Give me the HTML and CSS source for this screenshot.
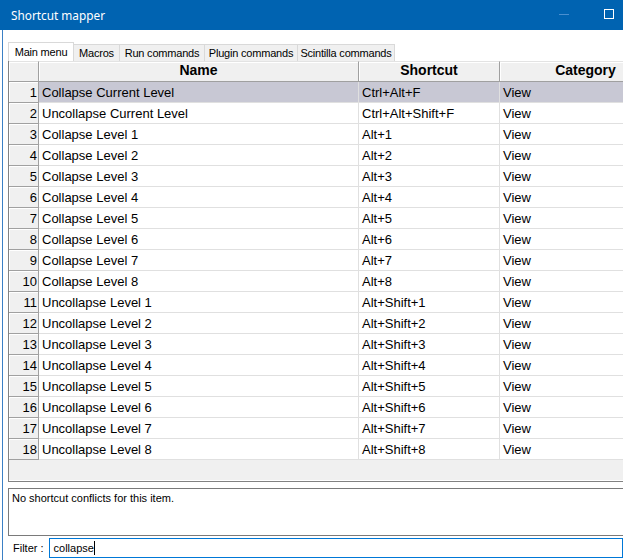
FILE: index.html
```html
<!DOCTYPE html>
<html>
<head>
<meta charset="utf-8">
<title>Shortcut mapper</title>
<link rel="stylesheet" href="styles.css">
</head>
<body>
<div class="titlebar">
  <span class="title">Shortcut mapper</span>
  <span class="min"></span>
  <span class="max"></span>
</div>
<div class="client">
  <div class="tabs">
    <div class="tab active w-main">Main menu</div>
    <div class="tab w-macros">Macros</div>
    <div class="tab w-run">Run commands</div>
    <div class="tab w-plugin">Plugin commands</div>
    <div class="tab w-scint">Scintilla commands</div>
  </div>
  <div class="grid">
    <div class="hd corner"></div>
    <div class="hd">Name</div>
    <div class="hd">Shortcut</div>
    <div class="hd">Category</div>

    <div class="num">1</div><div class="cell sel">Collapse Current Level</div><div class="cell sel">Ctrl+Alt+F</div><div class="cell sel">View</div>
    <div class="num">2</div><div class="cell">Uncollapse Current Level</div><div class="cell">Ctrl+Alt+Shift+F</div><div class="cell">View</div>
    <div class="num">3</div><div class="cell">Collapse Level 1</div><div class="cell">Alt+1</div><div class="cell">View</div>
    <div class="num">4</div><div class="cell">Collapse Level 2</div><div class="cell">Alt+2</div><div class="cell">View</div>
    <div class="num">5</div><div class="cell">Collapse Level 3</div><div class="cell">Alt+3</div><div class="cell">View</div>
    <div class="num">6</div><div class="cell">Collapse Level 4</div><div class="cell">Alt+4</div><div class="cell">View</div>
    <div class="num">7</div><div class="cell">Collapse Level 5</div><div class="cell">Alt+5</div><div class="cell">View</div>
    <div class="num">8</div><div class="cell">Collapse Level 6</div><div class="cell">Alt+6</div><div class="cell">View</div>
    <div class="num">9</div><div class="cell">Collapse Level 7</div><div class="cell">Alt+7</div><div class="cell">View</div>
    <div class="num">10</div><div class="cell">Collapse Level 8</div><div class="cell">Alt+8</div><div class="cell">View</div>
    <div class="num">11</div><div class="cell">Uncollapse Level 1</div><div class="cell">Alt+Shift+1</div><div class="cell">View</div>
    <div class="num">12</div><div class="cell">Uncollapse Level 2</div><div class="cell">Alt+Shift+2</div><div class="cell">View</div>
    <div class="num">13</div><div class="cell">Uncollapse Level 3</div><div class="cell">Alt+Shift+3</div><div class="cell">View</div>
    <div class="num">14</div><div class="cell">Uncollapse Level 4</div><div class="cell">Alt+Shift+4</div><div class="cell">View</div>
    <div class="num">15</div><div class="cell">Uncollapse Level 5</div><div class="cell">Alt+Shift+5</div><div class="cell">View</div>
    <div class="num">16</div><div class="cell">Uncollapse Level 6</div><div class="cell">Alt+Shift+6</div><div class="cell">View</div>
    <div class="num">17</div><div class="cell">Uncollapse Level 7</div><div class="cell">Alt+Shift+7</div><div class="cell">View</div>
    <div class="num">18</div><div class="cell">Uncollapse Level 8</div><div class="cell">Alt+Shift+8</div><div class="cell">View</div>

    <div class="filler"></div>
  </div>
  <div class="conflicts">No shortcut conflicts for this item.</div>
  <div class="filter">
    <span class="flabel">Filter :</span>
    <div class="finput">collapse<span class="caret"></span></div>
  </div>
</div>
</body>
</html>
```
FILE: styles.css
```css
html, body {
  margin: 0;
  padding: 0;
}
body {
  width: 623px;
  height: 560px;
  overflow: hidden;
  background: #ffffff;
  font-family: "Liberation Sans", Arial, sans-serif;
  color: #000;
}
.titlebar {
  height: 30px;
  background: #0063b1;
  display: flex;
  align-items: center;
  position: relative;
}
.title {
  color: #ffffff;
  font-family: "Noto Sans", "Open Sans", sans-serif;
  font-size: 11.8px;
  padding-left: 11px;
  padding-bottom: 1px;
}
.min {
  position: absolute;
  left: 559px;
  top: 14px;
  width: 10px;
  height: 1px;
  background: #4a8fd0;
}
.max {
  position: absolute;
  left: 604px;
  top: 9px;
  width: 8px;
  height: 8px;
  border: 1px solid #ffffff;
}
.client {
  margin-left: 2px;
  border-left: 1px solid #3b80c5;
  padding-left: 5px;
  width: 621px;
  height: 530px;
  box-sizing: border-box;
  overflow: hidden;
  background: #ffffff;
}
.tabs {
  display: flex;
  align-items: flex-end;
  padding-top: 12px;
  height: 19px;
}
.tab {
  box-sizing: border-box;
  height: 17px;
  background: #f0f0f0;
  border: 1px solid #d9d9d9;
  border-bottom: none;
  margin-left: -1px;
  font-size: 11px;
  letter-spacing: -0.2px;
  line-height: 16px;
  text-align: center;
  white-space: nowrap;
}
.tab.active {
  height: 19px;
  background: #ffffff;
  margin-left: 0;
  line-height: 18px;
  position: relative;
  z-index: 1;
}
.w-main { width: 66px; }
.w-macros { width: 47px; }
.w-run { width: 86px; }
.w-plugin { width: 94px; }
.w-scint { width: 98px; }

.grid {
  display: grid;
  grid-template-columns: 30px 320px 141px 172px;
  grid-auto-rows: 21px;
  width: 664px;
  border-left: 1px solid #828282;
  border-bottom: 1px solid #828282;
  font-size: 13px;
  background: #ffffff;
}
.grid > div {
  box-sizing: border-box;
  white-space: nowrap;
  overflow: hidden;
  line-height: 20px;
}
.hd {
  background: #f0f0f0;
  border-right: 1px solid #a0a0a0;
  border-bottom: 1px solid #a0a0a0;
  border-top: 1px solid #e3e3e3;
  box-shadow: inset 1px 1px 0 #ffffff;
  font-weight: bold;
  font-size: 14px;
  text-align: center;
}
.grid > .hd {
  line-height: 16px;
}
.num {
  background: #f0f0f0;
  border-right: 1px solid #a0a0a0;
  border-bottom: 1px solid #a0a0a0;
  box-shadow: inset 1px 1px 0 #ffffff;
  text-align: right;
  padding-right: 1px;
  padding-top: 1px;
}
.cell {
  border-right: 1px solid #e0e0e0;
  border-bottom: 1px solid #e0e0e0;
  padding-left: 3px;
  padding-top: 1px;
}
.cell.sel {
  background: #c8c8d4;
}
.filler {
  grid-column: 1 / -1;
  height: 20px;
  background: #f0f0f0;
}
.conflicts {
  margin-top: 6px;
  height: 48px;
  width: 700px;
  box-sizing: border-box;
  border: 1px solid #7a7a7a;
  font-size: 11px;
  padding: 3px 0 0 3px;
}
.filter {
  display: flex;
  align-items: center;
  margin-top: 2px;
  height: 20px;
}
.flabel {
  font-size: 11px;
  padding-left: 5px;
  width: 31px;
  white-space: nowrap;
}
.finput {
  margin-left: 5px;
  height: 20px;
  width: 600px;
  box-sizing: border-box;
  border: 1px solid #0078d7;
  font-size: 11px;
  line-height: 17px;
  padding-left: 4px;
  display: flex;
  align-items: center;
}
.caret {
  display: inline-block;
  width: 1px;
  height: 14px;
  background: #000;
}
```
